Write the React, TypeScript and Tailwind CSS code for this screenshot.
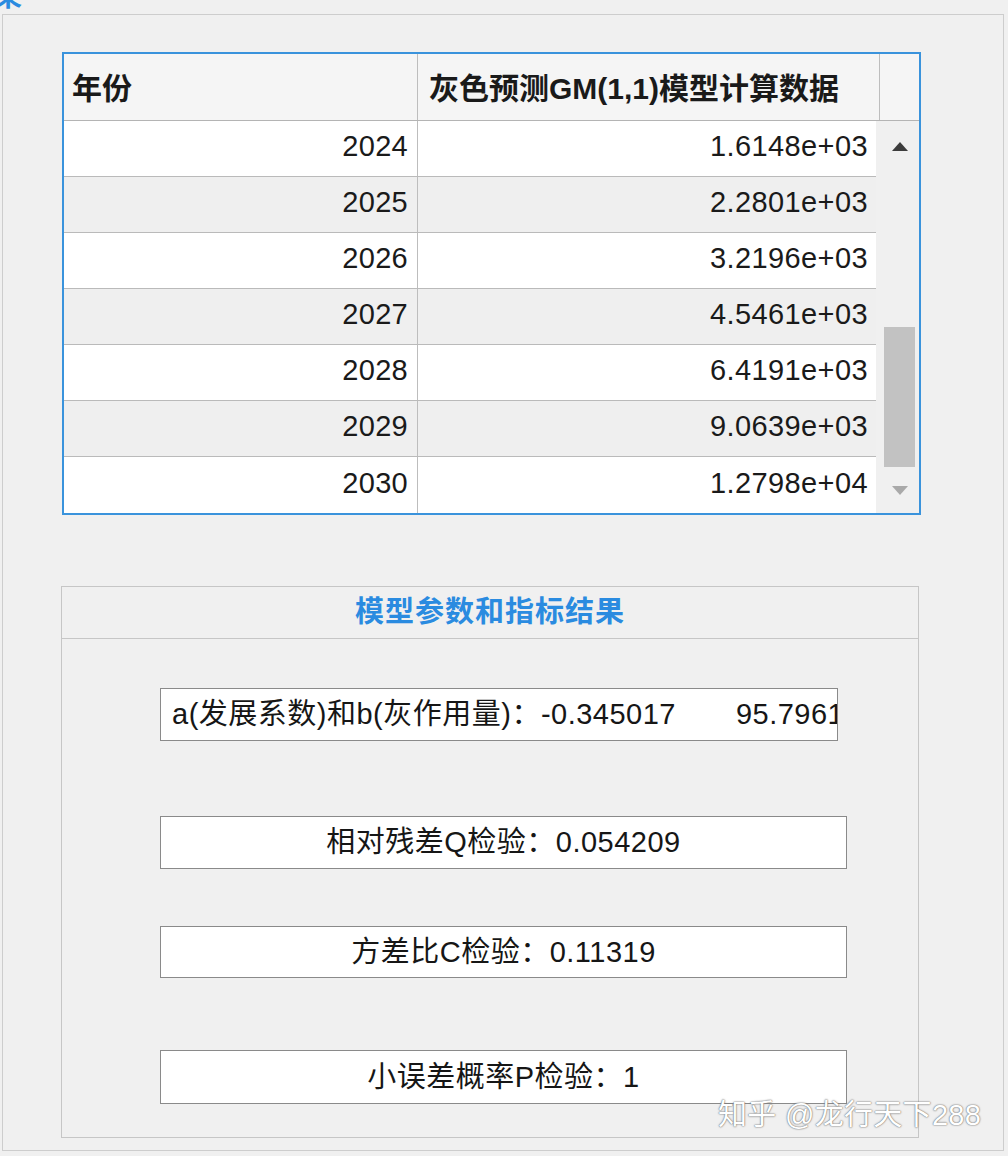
import React from 'react';

const rows = [
  { year: '2024', value: '1.6148e+03' },
  { year: '2025', value: '2.2801e+03' },
  { year: '2026', value: '3.2196e+03' },
  { year: '2027', value: '4.5461e+03' },
  { year: '2028', value: '6.4191e+03' },
  { year: '2029', value: '9.0639e+03' },
  { year: '2030', value: '1.2798e+04' },
];

const ResultBox: React.FC<{ className?: string; children: React.ReactNode }> = ({ className = '', children }) => (
  <div
    className={`flex items-center overflow-hidden whitespace-pre bg-white border border-[#8a8a8a] text-[29px] leading-none tracking-[0.5px] text-[#161616] ${className}`}
  >
    {children}
  </div>
);

export default function App() {
  return (
    <div className="relative w-[1008px] min-h-[1156px] bg-[#f0f0f0] font-['Liberation_Sans','Noto_Sans_CJK_SC',sans-serif] text-[#1a1a1a]">
      {/* 上方被截断的分组标题 */}
      <div className="h-[14px] overflow-hidden">
        <div className="-mt-[24px] -ml-[6px] text-[28px] font-bold text-[#2a8be0]">果</div>
      </div>

      <div className="ml-[2px] mr-[4px] h-[1137px] border border-[#cdcdcd] pt-[37px] pl-[59px]">
        {/* 数据表 */}
        <div className="w-[859px] h-[463px] border-2 border-[#3a93dc] bg-white flex flex-col">
          <div className="flex h-[67px] bg-[#f5f5f5] border-b border-[#b4b4b4]">
            <div className="w-[354px] border-r border-[#bdbdbd] flex items-center pl-[8px] pt-[3px] text-[30px] font-bold">
              年份
            </div>
            <div className="w-[462px] border-r border-[#bdbdbd] flex items-center pl-[11px] pt-[3px] text-[30px] font-bold whitespace-nowrap">
              灰色预测GM(1,1)模型计算数据
            </div>
            <div className="flex-1" />
          </div>

          <div className="flex flex-1">
            <div className="w-[812px] flex flex-col">
              {rows.map((r, i) => (
                <div
                  key={r.year}
                  className={`flex h-[56px] ${i < rows.length - 1 ? 'border-b border-[#bababa]' : ''} ${
                    i % 2 === 1 ? 'bg-[#efefef]' : 'bg-white'
                  }`}
                >
                  <div className="w-[354px] border-r border-[#bdbdbd] flex items-center justify-end pr-[9px] pb-[3px] text-[29px] tracking-[0.3px]">
                    {r.year}
                  </div>
                  <div className="flex-1 flex items-center justify-end pr-[8px] pb-[3px] text-[29px] tracking-[0.4px]">
                    {r.value}
                  </div>
                </div>
              ))}
            </div>

            {/* 滚动条 */}
            <div className="flex-1 bg-[#f0f0f0] flex flex-col items-center">
              <div className="h-[50px] flex items-center justify-center pl-[4px]">
                <svg width="16" height="9" viewBox="0 0 16 9">
                  <polygon points="0,9 8,0 16,9" fill="#3c3c3c" />
                </svg>
              </div>
              <div className="h-[156px]" />
              <div className="h-[140px] w-[31px] ml-[4px] bg-[#c2c2c2]" />
              <div className="h-[46px] flex items-center justify-center pl-[4px]">
                <svg width="16" height="9" viewBox="0 0 16 9">
                  <polygon points="0,0 16,0 8,9" fill="#a9a9a9" />
                </svg>
              </div>
            </div>
          </div>
        </div>

        {/* 模型参数和指标结果 */}
        <div className="mt-[71px] -ml-[1px] w-[858px] h-[552px] border border-[#c6c6c6] flex flex-col">
          <div className="h-[52px] border-b border-[#c6c6c6] flex items-center justify-center text-[29px] font-bold tracking-[1px] text-[#2a8be0]">
            模型参数和指标结果
          </div>
          <div className="pl-[98px] flex flex-col">
            <ResultBox className="mt-[49px] w-[678px] h-[53px] pl-[11px]">
              {'a(发展系数)和b(灰作用量)：-0.345017       95.7961'}
            </ResultBox>
            <ResultBox className="mt-[75px] w-[687px] h-[53px] justify-center">相对残差Q检验：0.054209</ResultBox>
            <ResultBox className="mt-[57px] w-[687px] h-[52px] justify-center">方差比C检验：0.11319</ResultBox>
            <ResultBox className="mt-[72px] w-[687px] h-[54px] justify-center">小误差概率P检验：1</ResultBox>
          </div>
        </div>
      </div>

      {/* 水印 */}
      <div className="absolute left-[718px] top-[1094px] text-[29px] tracking-[0.3px] text-white whitespace-pre [text-shadow:0_0_2px_#6f6f6f,0_0_1px_#6f6f6f]">
        知乎 @龙行天下288
      </div>
    </div>
  );
}
